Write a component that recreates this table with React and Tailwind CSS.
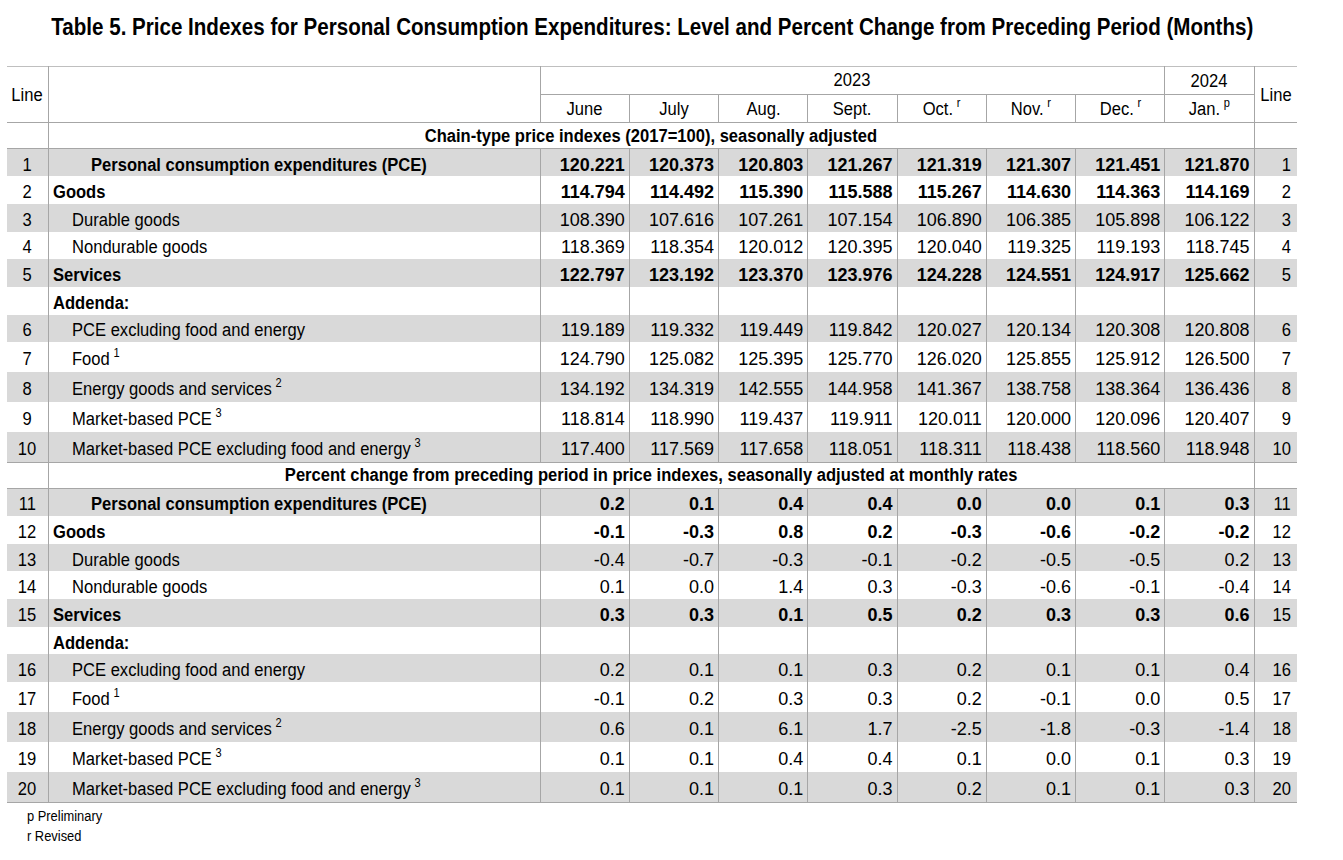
const months = [
  { m: "June" },
  { m: "July" },
  { m: "Aug." },
  { m: "Sept." },
  { m: "Oct.", s: "r" },
  { m: "Nov.", s: "r" },
  { m: "Dec.", s: "r" },
  { m: "Jan.", s: "p" },
];

const levels = [
  { n: 1, label: "Personal consumption expenditures (PCE)", ind: "pl-[42px]", bold: true, v: ["120.221", "120.373", "120.803", "121.267", "121.319", "121.307", "121.451", "121.870"] },
  { n: 2, label: "Goods", ind: "pl-[4px]", bold: true, v: ["114.794", "114.492", "115.390", "115.588", "115.267", "114.630", "114.363", "114.169"] },
  { n: 3, label: "Durable goods", ind: "pl-[23px]", v: ["108.390", "107.616", "107.261", "107.154", "106.890", "106.385", "105.898", "106.122"] },
  { n: 4, label: "Nondurable goods", ind: "pl-[23px]", v: ["118.369", "118.354", "120.012", "120.395", "120.040", "119.325", "119.193", "118.745"] },
  { n: 5, label: "Services", ind: "pl-[4px]", bold: true, v: ["122.797", "123.192", "123.370", "123.976", "124.228", "124.551", "124.917", "125.662"] },
  { label: "Addenda:", ind: "pl-[4px]", bold: true, addenda: true },
  { n: 6, label: "PCE excluding food and energy", ind: "pl-[23px]", v: ["119.189", "119.332", "119.449", "119.842", "120.027", "120.134", "120.308", "120.808"] },
  { n: 7, label: "Food", sup: "1", ind: "pl-[23px]", v: ["124.790", "125.082", "125.395", "125.770", "126.020", "125.855", "125.912", "126.500"] },
  { n: 8, label: "Energy goods and services", sup: "2", ind: "pl-[23px]", v: ["134.192", "134.319", "142.555", "144.958", "141.367", "138.758", "138.364", "136.436"] },
  { n: 9, label: "Market-based PCE", sup: "3", ind: "pl-[23px]", v: ["118.814", "118.990", "119.437", "119.911", "120.011", "120.000", "120.096", "120.407"] },
  { n: 10, label: "Market-based PCE excluding food and energy", sup: "3", ind: "pl-[23px]", v: ["117.400", "117.569", "117.658", "118.051", "118.311", "118.438", "118.560", "118.948"] },
];

const changes = [
  { n: 11, label: "Personal consumption expenditures (PCE)", ind: "pl-[42px]", bold: true, v: ["0.2", "0.1", "0.4", "0.4", "0.0", "0.0", "0.1", "0.3"] },
  { n: 12, label: "Goods", ind: "pl-[4px]", bold: true, v: ["-0.1", "-0.3", "0.8", "0.2", "-0.3", "-0.6", "-0.2", "-0.2"] },
  { n: 13, label: "Durable goods", ind: "pl-[23px]", v: ["-0.4", "-0.7", "-0.3", "-0.1", "-0.2", "-0.5", "-0.5", "0.2"] },
  { n: 14, label: "Nondurable goods", ind: "pl-[23px]", v: ["0.1", "0.0", "1.4", "0.3", "-0.3", "-0.6", "-0.1", "-0.4"] },
  { n: 15, label: "Services", ind: "pl-[4px]", bold: true, v: ["0.3", "0.3", "0.1", "0.5", "0.2", "0.3", "0.3", "0.6"] },
  { label: "Addenda:", ind: "pl-[4px]", bold: true, addenda: true },
  { n: 16, label: "PCE excluding food and energy", ind: "pl-[23px]", v: ["0.2", "0.1", "0.1", "0.3", "0.2", "0.1", "0.1", "0.4"] },
  { n: 17, label: "Food", sup: "1", ind: "pl-[23px]", v: ["-0.1", "0.2", "0.3", "0.3", "0.2", "-0.1", "0.0", "0.5"] },
  { n: 18, label: "Energy goods and services", sup: "2", ind: "pl-[23px]", v: ["0.6", "0.1", "6.1", "1.7", "-2.5", "-1.8", "-0.3", "-1.4"] },
  { n: 19, label: "Market-based PCE", sup: "3", ind: "pl-[23px]", v: ["0.1", "0.1", "0.4", "0.4", "0.1", "0.0", "0.1", "0.3"] },
  { n: 20, label: "Market-based PCE excluding food and energy", sup: "3", ind: "pl-[23px]", v: ["0.1", "0.1", "0.1", "0.3", "0.2", "0.1", "0.1", "0.3"] },
];

// narrow-looking text: the source uses a condensed face we don't have
function Narrow({ children, origin = "origin-left" }) {
  return <span className={`inline-block whitespace-nowrap scale-x-[0.92] ${origin}`}>{children}</span>;
}

function Sup({ children }) {
  return <sup className="text-[12px] ml-[4px] relative -top-[8px]">{children}</sup>;
}

function Row({ r, shaded }) {
  const bg = shaded ? "bg-[#d9d9d9]" : "bg-white";
  const h = r.sup ? "h-[30px]" : "h-[27.7px]";
  const pt = r.sup ? "pt-[3px]" : "pt-[4px]";
  return (
    <tr className={`${bg} ${h}`}>
      <td className={`text-center ${pt}`}>
        <Narrow origin="origin-center">{r.n}</Narrow>
      </td>
      <td className={`border-l border-[#a6a6a6] ${r.ind} ${r.bold ? "font-bold" : ""} ${pt}`}>
        <Narrow>
          {r.label}
          {r.sup && <Sup>{r.sup}</Sup>}
        </Narrow>
      </td>
      {(r.v || Array(8).fill("")).map((x, i) => (
        <td
          key={i}
          className={`border-l border-[#a6a6a6] text-right pr-[4px] ${r.bold ? "font-bold" : ""} ${pt}`}
        >
          {x}
        </td>
      ))}
      <td className={`border-l border-[#a6a6a6] text-right pr-[6px] ${pt}`}>
        <Narrow origin="origin-right">{r.n}</Narrow>
      </td>
    </tr>
  );
}

function Section({ title }) {
  return (
    <tr className="h-[26px] border-t border-b border-[#a6a6a6]">
      <td></td>
      <td colSpan={9} className="border-l border-r border-[#a6a6a6] text-center font-bold">
        <Narrow origin="origin-center">{title}</Narrow>
      </td>
      <td></td>
    </tr>
  );
}

export default function App() {
  return (
    <div
      className="w-[1343px] h-[860px] bg-white text-black text-[18px] leading-none"
      style={{ fontFamily: '"Liberation Sans", Arial, sans-serif' }}
    >
      <div className="ml-[7px] w-[1290px]">
        <h1 className="h-[66px] pt-[15px] flex justify-center text-[24px] font-bold">
          <span className="inline-block whitespace-nowrap scale-x-[0.857] origin-center">
            Table 5. Price Indexes for Personal Consumption Expenditures: Level and Percent Change from Preceding Period (Months)
          </span>
        </h1>
        <table className="w-[1290px] table-fixed border-collapse">
          <colgroup>
            <col className="w-[41px]" />
            <col className="w-[492px]" />
            {months.map((m) => (
              <col key={m.m} className="w-[89.25px]" />
            ))}
            <col className="w-[43px]" />
          </colgroup>
          <thead>
            <tr className="h-[28px] border-t border-[#bfbfbf]">
              <td rowSpan={2} className="text-center align-middle">
                <Narrow origin="origin-center">Line</Narrow>
              </td>
              <td rowSpan={2} className="border-l border-[#a6a6a6]"></td>
              <td colSpan={7} className="border-l border-[#a6a6a6] text-center align-top pt-[4px]">
                <Narrow origin="origin-center">2023</Narrow>
              </td>
              <td className="border-l border-[#a6a6a6] text-center align-top pt-[5px]">
                <Narrow origin="origin-center">2024</Narrow>
              </td>
              <td rowSpan={2} className="border-l border-[#a6a6a6] text-center align-middle">
                <Narrow origin="origin-center">Line</Narrow>
              </td>
            </tr>
            <tr className="h-[28px] border-b border-[#a6a6a6]">
              {months.map((m) => (
                <td key={m.m} className="border-l border-t border-[#a6a6a6] text-center align-bottom pb-[4px]">
                  <Narrow origin="origin-center">
                    {m.m}
                    {m.s && <Sup>{m.s}</Sup>}
                  </Narrow>
                </td>
              ))}
            </tr>
          </thead>
          <tbody>
            <Section title="Chain-type price indexes (2017=100), seasonally adjusted" />
            {levels.map((r, i) => (
              <Row key={"l" + i} r={r} shaded={!r.addenda && i % 2 === 0} />
            ))}
            <Section title="Percent change from preceding period in price indexes, seasonally adjusted at monthly rates" />
            {changes.map((r, i) => (
              <Row key={"c" + i} r={r} shaded={!r.addenda && i % 2 === 0} />
            ))}
          </tbody>
        </table>
        <div className="border-t border-[#a6a6a6] pl-[20px] pt-[3px] text-[14px] leading-[20px]">
          <div>
            <Narrow>p Preliminary</Narrow>
          </div>
          <div>
            <Narrow>r Revised</Narrow>
          </div>
        </div>
      </div>
    </div>
  );
}
